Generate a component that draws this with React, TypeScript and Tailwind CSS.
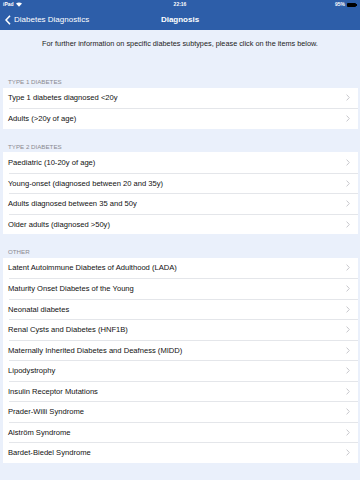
const sections: { title: string; items: string[] }[] = [
  {
    title: "TYPE 1 DIABETES",
    items: ["Type 1 diabetes diagnosed <20y", "Adults (>20y of age)"],
  },
  {
    title: "TYPE 2 DIABETES",
    items: [
      "Paediatric (10-20y of age)",
      "Young-onset (diagnosed between 20 and 35y)",
      "Adults diagnosed between 35 and 50y",
      "Older adults (diagnosed >50y)",
    ],
  },
  {
    title: "OTHER",
    items: [
      "Latent Autoimmune Diabetes of Adulthood (LADA)",
      "Maturity Onset Diabetes of the Young",
      "Neonatal diabetes",
      "Renal Cysts and Diabetes (HNF1B)",
      "Maternally Inherited Diabetes and Deafness (MIDD)",
      "Lipodystrophy",
      "Insulin Receptor Mutations",
      "Prader-Willi Syndrome",
      "Alström Syndrome",
      "Bardet-Biedel Syndrome",
    ],
  },
];

const Chevron = () => (
  <svg width="4" height="7" viewBox="0 0 4 7" className="shrink-0">
    <path d="M0.6 0.6 L3.3 3.5 L0.6 6.4" fill="none" stroke="#c7c7cc" strokeWidth="1" />
  </svg>
);

const StatusBar = () => (
  <div className="relative flex h-[9.5px] items-center justify-between px-[3px] text-[5px] font-semibold text-white">
    <div className="flex items-center gap-[2px]">
      <span>iPad</span>
      <svg width="6" height="5" viewBox="0 0 12 9">
        <path d="M6 9 L0 2.5 Q6 -2 12 2.5 Z" fill="white" />
      </svg>
    </div>
    <span className="absolute left-1/2 -translate-x-1/2">22:16</span>
    <div className="flex items-center gap-[2px]">
      <span>95%</span>
      <div className="flex items-center">
        <div className="h-[4px] w-[9px] rounded-[1px] bg-black" />
        <div className="h-[2px] w-[1px] bg-black" />
      </div>
    </div>
  </div>
);

const NavBar = () => (
  <div className="relative flex h-[20.5px] items-center text-white">
    <div className="flex items-center gap-[3px] pl-[5px]">
      <svg width="6" height="10" viewBox="0 0 6 10">
        <path d="M5 0.7 L1 5 L5 9.3" fill="none" stroke="white" strokeWidth="1.6" />
      </svg>
      <span className="text-[8px]">Diabetes Diagnostics</span>
    </div>
    <span className="absolute left-1/2 -translate-x-1/2 text-[8px] font-bold">Diagnosis</span>
  </div>
);

export default function App() {
  return (
    <div
      className="flex h-[480px] w-[360px] flex-col overflow-hidden bg-[#eaf0fb]"
      style={{ fontFamily: '"Liberation Sans", Arial, sans-serif' }}
    >
      <header className="bg-[#2d5ea9]">
        <StatusBar />
        <NavBar />
      </header>
      <p className="mt-[10px] h-[8px] text-center text-[7.3px] leading-[8px] text-[#222]">
        For further information on specific diabetes subtypes, please click on the items below.
      </p>
      <div className="mt-[30px] flex flex-col">
        {sections.map((section, i) => (
          <div key={section.title} className={i === 0 ? "" : "mt-[14px]"}>
            <div className="px-[8px] pb-[2.5px] text-[6.2px] leading-[7px] text-[#8a8a90]">
              {section.title}
            </div>
            <div className="ml-[3px] mr-[2px] bg-white">
              {section.items.map((item, j) => (
                <div key={item} className="flex h-[20.5px] flex-col">
                  {j > 0 && <div className="ml-[6px] h-px bg-[#e4e6ea]" />}
                  <div className="flex flex-1 items-center justify-between pl-[5px] pr-[8px]">
                    <span className="text-[7.6px] text-[#111]">{item}</span>
                    <Chevron />
                  </div>
                </div>
              ))}
            </div>
          </div>
        ))}
      </div>
    </div>
  );
}
